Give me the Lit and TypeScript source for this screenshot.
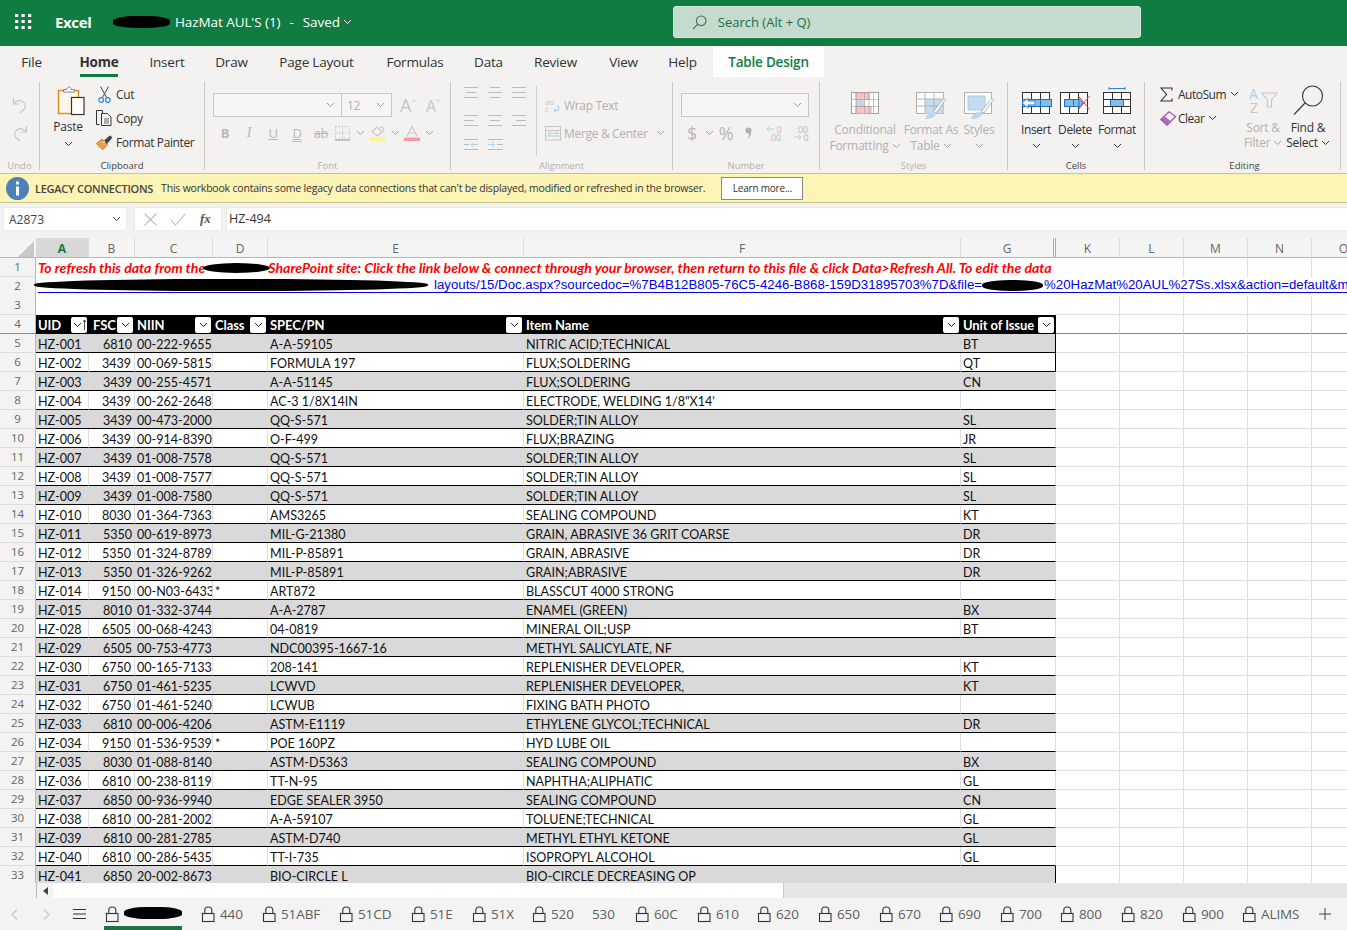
import { LitElement, html, css, svg } from "lit";
import { customElement } from "lit/decorators.js";

const chev = (c = "#605e5c") => html`<svg class="chev" width="9" height="6" viewBox="0 0 9 6"><path d="M1 1l3.5 3.5L8 1" fill="none" stroke=${c} stroke-width="1"/></svg>`;
const G = "#c8c6c4";
const BL = "#a9d3f0";

const I = {
  waffle: html`<svg width="17" height="16" viewBox="0 0 17 16" fill="#fff">${[0, 6.5, 13].map(x => [0, 6, 12].map(y => svg`<rect x=${x} y=${y} width="3.2" height="3" />`))}</svg>`,
  search: html`<svg width="15" height="15" viewBox="0 0 15 15" fill="none" stroke="#3f7259" stroke-width="1.1"><circle cx="9.2" cy="5.8" r="4.8"/><path d="M5.8 9.2L1 14"/></svg>`,
  undo: html`<svg width="16" height="17" viewBox="0 0 16 17" fill="none" stroke=${G} stroke-width="1.2"><path d="M1.5 1v6h6"/><path d="M1.5 7C4 4 7.5 3 10.5 4.5c3.500 2 3.500 6 1.500 8L8 16"/></svg>`,
  redo: html`<svg width="16" height="17" viewBox="0 0 16 17" fill="none" stroke=${G} stroke-width="1.2"><path d="M14.500 1v6h-6"/><path d="M14.500 7C12 4 8.500 3 5.500 4.500c-3.500 2-3.500 6-1.500 8L8 16"/></svg>`,
  paste: html`<svg width="28" height="31" viewBox="0 0 28 31"><rect x="1.500" y="5.500" width="20" height="23" fill="#fdf6e9" stroke="#e08a1e" stroke-width="1.400"/><path d="M6.500 7V4.500h3.500C10.500 1 13.500 1 14 4.500h3.500V7z" fill="#fff" stroke="#8a8886"/><rect x="14.500" y="12.500" width="12.500" height="17" fill="#fff" stroke="#333" stroke-width="1.200"/></svg>`,
  cut: html`<svg width="13" height="17" viewBox="0 0 13 17" fill="none"><path d="M2.500 0.500l6 11M10.500 0.500l-6 11" stroke="#444" stroke-width="1"/><circle cx="3.200" cy="14" r="2.300" stroke="#2b88d8" stroke-width="1.200"/><circle cx="9.800" cy="14" r="2.300" stroke="#2b88d8" stroke-width="1.200"/></svg>`,
  copy: html`<svg width="16" height="16" viewBox="0 0 16 16" fill="none" stroke="#333"><path d="M3.500 14.500H.5V.5h6v3"/><path d="M5.500 3.500h6l3.500 3.500v8.500H5.500z" fill="#fff"/><path d="M8 9h5M8 11h5M8 13h5" stroke-width=".8"/></svg>`,
  painter: html`<svg width="17" height="15" viewBox="0 0 17 15"><path d="M0.500 8.500L6 4l5.500 5.500L7 14.500C5 13 2 11 0.500 8.500z" fill="#f0a04b" stroke="#d67a1a"/><path d="M7 8l3-3" stroke="#fff" stroke-width="1"/><path d="M8.500 5.500L14 .8 16 2.500 11 8.500z" fill="#444" stroke="#222" stroke-width=".6"/></svg>`,
  grow: html`<svg width="17" height="15" viewBox="0 0 17 15"><text x="0" y="14" font-size="18" fill=${G} font-family="Open Sans">A</text><path d="M12 4l2.200-2.500L16.500 4" fill="none" stroke=${BL}/></svg>`,
  shrink: html`<svg width="15" height="15" viewBox="0 0 15 15"><text x="0" y="14" font-size="16" fill=${G} font-family="Open Sans">A</text><path d="M10 1l2.200 2.500L14.500 1" fill="none" stroke=${BL}/></svg>`,
  borders: html`<svg width="16" height="15" viewBox="0 0 16 15" fill="none" stroke=${G} stroke-dasharray="1.500 1.500"><rect x=".5" y=".5" width="14" height="12.500"/><path d="M7.500 1v12M1 7h14"/><path d="M0 14h15.500" stroke-dasharray="none" stroke="#b0aeac" stroke-width="1.300"/></svg>`,
  fill: html`<svg width="16" height="15" viewBox="0 0 16 15"><path d="M2 6l5-5 5 5-4.500 4z" fill="none" stroke=${G} stroke-width="1.100"/><path d="M10 2c2-2 3.500-.5 3.500 2v2" fill="none" stroke=${BL} stroke-width="1.300"/><rect y="11.500" width="16" height="3.500" fill="#fbf48c"/></svg>`,
  color: html`<svg width="16" height="15" viewBox="0 0 16 15"><path d="M3 10.500L8 .5l5 10M5 7h6" fill="none" stroke=${G} stroke-width="1.200"/><rect y="11.500" width="16" height="3.500" fill="#f29b9b"/></svg>`,
  wrap: html`<svg width="15" height="15" viewBox="0 0 15 15"><text x="0" y="6.500" font-size="8" fill=${G} font-family="Open Sans">ab</text><text x="0" y="14" font-size="8" fill=${G} font-family="Open Sans">c</text><path d="M9 12.500h3c2.500 0 2.500-4.500 0-4.500M9 12.500l2-2M9 12.500l2 2" fill="none" stroke=${BL} stroke-width="1.100"/></svg>`,
  merge: html`<svg width="16" height="15" viewBox="0 0 16 15" fill="none" stroke=${G}><rect x=".5" y=".5" width="15" height="13.500"/><path d="M.5 4.500h15M.5 10h15"/><path d="M3 7.200h10M3 7.200l2-2M3 7.200l2 2M13 7.200l-2-2M13 7.200l-2 2" stroke=${BL}/></svg>`,
  comma: html`<svg width="7" height="13" viewBox="0 0 7 13"><circle cx="3.500" cy="3.500" r="3" fill="#b3b0ad"/><path d="M6 4c.5 4-1.500 7-4 8.500C4 10 4.300 8 4 6z" fill="#b3b0ad"/></svg>`,
  dec: html`<svg width="17" height="16" viewBox="0 0 17 16" fill="none"><path d="M1 4h7M1 4l2.400-2.400M1 4l2.400 2.400" stroke=${BL}/><text x="10.500" y="7.500" font-size="9" fill="#bdbbb9" font-family="Open Sans">0</text><text x="3" y="15.500" font-size="9" fill="#bdbbb9" font-family="Open Sans">.00</text></svg>`,
  inc: html`<svg width="17" height="16" viewBox="0 0 17 16" fill="none"><text x="3" y="7.500" font-size="9" fill="#bdbbb9" font-family="Open Sans">.00</text><path d="M1 12h7M8 12l-2.400-2.400M8 12l-2.400 2.400" stroke=${BL}/><text x="10.500" y="15.500" font-size="9" fill="#bdbbb9" font-family="Open Sans">0</text></svg>`,
  cf: html`<svg width="28" height="22" viewBox="0 0 28 22"><rect x=".5" y=".5" width="27" height="21" fill="#fff" stroke="#a19f9d"/><rect x="5" y="1" width="13" height="6.500" fill="#f7c5c5" stroke="#ec9a9a"/><rect x="5" y="7.500" width="8.500" height="7" fill="#bdd7ee"/><rect x="5" y="14.500" width="15" height="7" fill="#f7c5c5" stroke="#ec9a9a"/><path d="M.5 7.500h27M.5 14.500h27M5 0v22M13.500 0v22M18 0v22M22.500 0v22" stroke="#a19f9d" stroke-width=".6" fill="none"/></svg>`,
  fat: html`<svg width="30" height="28" viewBox="0 0 30 28"><rect x=".5" y=".5" width="27" height="21" fill="#fff" stroke="#b5b3b1"/><rect x="9" y="7" width="18.500" height="14.500" fill="#c5dcf0"/><path d="M.5 7h27M.5 14h27M9 0v22M18 0v22" stroke="#b5b3b1" fill="none"/><path d="M17 20L28 6l1.500 1.500L20 21z" fill="#fff" stroke="#b5b3b1"/><path d="M9 27c1-4 5-7.500 9-7l2 1.500c0 3-4 5.500-11 5.500z" fill="#bcd7ec"/></svg>`,
  styles: html`<svg width="30" height="28" viewBox="0 0 30 28"><rect x=".5" y=".5" width="27" height="21" fill="#fff" stroke="#b5b3b1"/><rect x="4" y="4" width="17" height="14" fill="#c5dcf0" stroke="#a9cbe6"/><path d="M17 20L28 6l1.500 1.500L20 21z" fill="#fff" stroke="#b5b3b1"/><path d="M7 27c1-4 5-7.500 9-7l2 1.500c0 3-4 5.500-11 5.500z" fill="#bcd7ec"/></svg>`,
  insert: html`<svg width="31" height="22" viewBox="0 0 31 22"><rect x="1.500" y=".5" width="27" height="21" fill="#fff" stroke="#333"/><path d="M10.500 0v22M19.500 0v22" stroke="#333"/><rect x="1.500" y="7.500" width="29" height="7" fill="#85bdea" stroke="#1a73c0"/><path d="M19.500 7v8" stroke="#1a73c0"/><path d="M1 11l6-5v3h7v4H7v3z" fill="#fff" stroke="#2b88d8"/></svg>`,
  del: html`<svg width="30" height="22" viewBox="0 0 30 22"><rect x=".5" y=".5" width="27" height="21" fill="#fff" stroke="#333"/><path d="M9.500 0v22M18.500 0v22" stroke="#333"/><rect x="4.500" y="7.500" width="15" height="7" fill="#85bdea" stroke="#1a73c0"/><path d="M13.500 7v8" stroke="#1a73c0"/><path d="M19 6.500l4 4.500-4 4.500z" fill="#85bdea" stroke="#1a73c0"/><path d="M18.500 4l11 13.500M29.500 4l-11 13.500" stroke="#e8413c" stroke-width="1"/></svg>`,
  fmt: html`<svg width="28" height="27" viewBox="0 0 28 27"><path d="M6 1.500h16M6 0v3M22 0v3" stroke="#2b88d8" fill="none"/><rect x=".5" y="5.500" width="27" height="21" fill="#fff" stroke="#333"/><path d="M9.500 5v22M18.500 5v22" stroke="#333"/><rect x="7.500" y="12.500" width="13" height="7" fill="#85bdea" stroke="#1a73c0"/><path d="M0 12.500h27M0 19.500h27" stroke="#333"/><rect x="9" y="13" width="11" height="6" fill="#85bdea"/></svg>`,
  sigma: html`<svg width="13" height="15" viewBox="0 0 13 15" fill="none" stroke="#333" stroke-width="1.100"><path d="M12 3.500V1H1l5.500 6.500L1 14h11v-2.500"/></svg>`,
  eraser: html`<svg width="16" height="15" viewBox="0 0 16 15"><path d="M0.800 8.500L9 .8 15.500 5.500 7 14z" fill="#fff" stroke="#9c4fb5" stroke-width="1.300"/><path d="M0.800 8.500L4.500 5l6 5L7 14z" fill="#b065c9"/></svg>`,
  sort: html`<svg width="29" height="27" viewBox="0 0 29 27"><text x="0" y="12" font-size="14" fill=${BL} font-family="Open Sans">A</text><text x="1" y="26" font-size="14" fill=${G} font-family="Open Sans">Z</text><path d="M13 6h15l-5.500 7v7h-4v-7z" fill="none" stroke=${G} stroke-width="1.100"/></svg>`,
  find: html`<svg width="31" height="31" viewBox="0 0 31 31" fill="none" stroke="#333" stroke-width="1.100"><circle cx="19.500" cy="11" r="10"/><path d="M12 18L1 29.500"/></svg>`,
  info: html`<svg width="23" height="23" viewBox="0 0 23 23"><circle cx="11.500" cy="11.500" r="11.500" fill="#4e81b8"/><rect x="10" y="9.500" width="3" height="9" fill="#fff"/><rect x="10" y="4.500" width="3" height="3" fill="#fff"/></svg>`,
  x: html`<svg width="13" height="13" viewBox="0 0 13 13" fill="none" stroke="#bdbdbd" stroke-width="1.100"><path d="M.5.5l12 12M12.500.5l-12 12"/></svg>`,
  check: html`<svg width="16" height="13" viewBox="0 0 16 13" fill="none" stroke="#bdbdbd" stroke-width="1.100"><path d="M.5 6.500L5.500 12 15.500.5"/></svg>`,
  lock: html`<svg class="lock" width="13" height="16" viewBox="0 0 13 16" fill="none" stroke="#333" stroke-width="1.100"><rect x=".5" y="7.500" width="11.500" height="8"/><path d="M2.800 7.500V4c0-4 7-4 7 0v3.500"/></svg>`,
  burger: html`<svg width="13" height="10" viewBox="0 0 13 10" stroke="#333" stroke-width="1"><path d="M0 .5h13M0 5h13M0 9.500h13"/></svg>`,
  plus: html`<svg width="12" height="12" viewBox="0 0 12 12" stroke="#444"><path d="M0 6h12M6 0v12"/></svg>`,
  prev: html`<svg width="7" height="11" viewBox="0 0 7 11" fill="none" stroke="#c8c6c4" stroke-width="1.100"><path d="M6 .5L1 5.500l5 5"/></svg>`,
  next: html`<svg width="7" height="11" viewBox="0 0 7 11" fill="none" stroke="#c8c6c4" stroke-width="1.100"><path d="M1 .5l5 5-5 5"/></svg>`,
  left: html`<svg width="5" height="8" viewBox="0 0 5 8"><path d="M5 0L0 4l5 4z" fill="#444"/></svg>`,
};

const lines = (widths: number[], dx: number[]) => html`<svg width="15" height="13" viewBox="0 0 15 13" stroke="#bdbbb9">${widths.map((w, i) => svg`<path d="M${dx[i]} ${i * 5 + 1.5}h${w}" />`)}</svg>`;
const indentL = html`<svg width="15" height="13" viewBox="0 0 15 13" fill="none" stroke="#bdbbb9"><path d="M0 6.500h5"/><path d="M7 6.500h7M7 6.500l2.200-2.200M7 6.500l2.200 2.200" stroke=${BL}/><path d="M0 1.500h14M0 11.500h14"/></svg>`;
const indentR = html`<svg width="15" height="13" viewBox="0 0 15 13" fill="none" stroke="#bdbbb9"><path d="M9 6.500h6"/><path d="M0 6.500h6.500M6.500 6.500L4.300 4.300M6.500 6.500L4.300 8.700" stroke=${BL}/><path d="M0 1.500h15M0 11.500h15"/></svg>`;

type Row = [string, string, string, string, string, string, string];
const DATA: Row[] = [
  ["HZ-001", "6810", "00-222-9655", "", "A-A-59105", "NITRIC ACID;TECHNICAL", "BT"],
  ["HZ-002", "3439", "00-069-5815", "", "FORMULA 197", "FLUX;SOLDERING", "QT"],
  ["HZ-003", "3439", "00-255-4571", "", "A-A-51145", "FLUX;SOLDERING", "CN"],
  ["HZ-004", "3439", "00-262-2648", "", "AC-3 1/8X14IN", "ELECTRODE, WELDING 1/8\"X14'", ""],
  ["HZ-005", "3439", "00-473-2000", "", "QQ-S-571", "SOLDER;TIN ALLOY", "SL"],
  ["HZ-006", "3439", "00-914-8390", "", "O-F-499", "FLUX;BRAZING", "JR"],
  ["HZ-007", "3439", "01-008-7578", "", "QQ-S-571", "SOLDER;TIN ALLOY", "SL"],
  ["HZ-008", "3439", "01-008-7577", "", "QQ-S-571", "SOLDER;TIN ALLOY", "SL"],
  ["HZ-009", "3439", "01-008-7580", "", "QQ-S-571", "SOLDER;TIN ALLOY", "SL"],
  ["HZ-010", "8030", "01-364-7363", "", "AMS3265", "SEALING COMPOUND", "KT"],
  ["HZ-011", "5350", "00-619-8973", "", "MIL-G-21380", "GRAIN, ABRASIVE 36 GRIT COARSE", "DR"],
  ["HZ-012", "5350", "01-324-8789", "", "MIL-P-85891", "GRAIN, ABRASIVE", "DR"],
  ["HZ-013", "5350", "01-326-9262", "", "MIL-P-85891", "GRAIN;ABRASIVE", "DR"],
  ["HZ-014", "9150", "00-N03-6433", "*", "ART872", "BLASSCUT 4000 STRONG", ""],
  ["HZ-015", "8010", "01-332-3744", "", "A-A-2787", "ENAMEL (GREEN)", "BX"],
  ["HZ-028", "6505", "00-068-4243", "", "04-0819", "MINERAL OIL;USP", "BT"],
  ["HZ-029", "6505", "00-753-4773", "", "NDC00395-1667-16", "METHYL SALICYLATE, NF", ""],
  ["HZ-030", "6750", "00-165-7133", "", "208-141", "REPLENISHER DEVELOPER,", "KT"],
  ["HZ-031", "6750", "01-461-5235", "", "LCWVD", "REPLENISHER DEVELOPER,", "KT"],
  ["HZ-032", "6750", "01-461-5240", "", "LCWUB", "FIXING BATH PHOTO", ""],
  ["HZ-033", "6810", "00-006-4206", "", "ASTM-E1119", "ETHYLENE GLYCOL;TECHNICAL", "DR"],
  ["HZ-034", "9150", "01-536-9539", "*", "POE 160PZ", "HYD LUBE OIL", ""],
  ["HZ-035", "8030", "01-088-8140", "", "ASTM-D5363", "SEALING COMPOUND", "BX"],
  ["HZ-036", "6810", "00-238-8119", "", "TT-N-95", "NAPHTHA;ALIPHATIC", "GL"],
  ["HZ-037", "6850", "00-936-9940", "", "EDGE SEALER 3950", "SEALING COMPOUND", "CN"],
  ["HZ-038", "6810", "00-281-2002", "", "A-A-59107", "TOLUENE;TECHNICAL", "GL"],
  ["HZ-039", "6810", "00-281-2785", "", "ASTM-D740", "METHYL ETHYL KETONE", "GL"],
  ["HZ-040", "6810", "00-286-5435", "", "TT-I-735", "ISOPROPYL ALCOHOL", "GL"],
  ["HZ-041", "6850", "20-002-8673", "", "BIO-CIRCLE L", "BIO-CIRCLE DECREASING OP", ""],
];

const TABS: [string, number, boolean?][] = [
  ["File", 63], ["Home", 72, true], ["Insert", 64], ["Draw", 65], ["Page Layout", 105], ["Formulas", 92], ["Data", 55], ["Review", 79], ["View", 57], ["Help", 61],
];

const SHEETS: [string, number, boolean][] = [
  ["440", 41, true], ["51ABF", 57, true], ["51CD", 52, true], ["51E", 41, true], ["51X", 40, true], ["520", 39, true], ["530", 24, false], ["60C", 42, true], ["610", 40, true], ["620", 41, true], ["650", 41, true], ["670", 40, true], ["690", 41, true], ["700", 40, true], ["800", 41, true], ["820", 41, true], ["900", 40, true], ["ALIMS", 58, true],
];

const COLS = ["A", "B", "C", "D", "E", "F", "G", "K", "L", "M", "N", "O"];
const EMPTY = [0, 1, 2, 3, 4];

@customElement("app-root")
export class AppRoot extends LitElement {
  static styles = css`
    :host { display: block; width: 1347px; height: 930px; overflow: hidden; background: #f3f2f1; font-family: "Open Sans", "Noto Sans", sans-serif; color: #323130; }
    svg { display: block; flex: none; overflow: visible; }
    .top { height: 46px; background: #107c41; color: #fff; display: flex; align-items: center; padding-bottom: 2px; box-sizing: border-box; }
    .waffle { width: 55px; padding-left: 15px; box-sizing: border-box; }
    .excel { font-weight: 700; font-size: 15px; width: 58px; letter-spacing: -.35px; }
    .blob { display: inline-block; background: #000; border-radius: 50%; flex: none; }
    .b-title { width: 57px; height: 12px; margin-right: 5px; border-radius: 40%; }
    .doc { font-size: 13.5px; display: flex; align-items: center; white-space: nowrap; letter-spacing: -.08px; }
    .doc span.sep { margin: 0 9px 0 9px; }
    .doc .chev { margin-left: 3px; }
    .searchwrap { margin-left: 321px; }
    .searchbox { width: 468px; height: 32px; box-sizing: border-box; border: 1px solid #d8e7dd; border-radius: 3px; background: #c5dbcd; display: flex; align-items: center; padding-left: 18px; gap: 11px; color: #1d6e47; font-size: 13px; }

    .tabs { height: 31px; display: flex; font-size: 13.5px; box-sizing: border-box; letter-spacing: -.2px; }
    .tab { display: flex; justify-content: center; align-items: center; height: 31px; box-sizing: border-box; position: relative; white-space: nowrap; color: #323130; }
    .tab.on { font-weight: 700; color: #323130; }
    .tab .ul { position: absolute; left: 50%; bottom: 0; transform: translateX(-50%); height: 3px; width: 38px; background: #107c41; }
    .tab.td { width: 111px; background: #fff; color: #107c41; font-weight: 600; }

    .ribbon { height: 96px; display: flex; padding-top: 5px; box-sizing: border-box; font-size: 12px; letter-spacing: -.24px; }
    .group { height: 88px; display: flex; flex-direction: column; border-right: 1px solid #c8c6c4; box-sizing: border-box; flex: none; }
    .gbody { flex: 1; display: flex; min-height: 0; }
    .glabel { height: 10px; line-height: 10px; font-size: 9.500px; text-align: center; color: #b3b0ad; margin-bottom: -1px; white-space: nowrap; letter-spacing: 0; }
    .glabel.en { color: #444; }
    .col { display: flex; flex-direction: column; }
    .dis { color: #b3b0ad; }
    .undo { width: 40px; }
    .undo .gbody { flex-direction: column; align-items: center; padding: 15px 0 0 0; gap: 11px; box-sizing: border-box; }
    .clip { width: 165px; }
    .pastec { width: 36px; margin-left: 10px; display: flex; flex-direction: column; align-items: center; padding-top: 3px; box-sizing: border-box; }
    .pastec svg:first-child { margin-left: 5px; }
    .pastec .t { margin-top: 3px; line-height: 16px; }
    .pastec .chev { margin-top: 6px; }
    .small { margin-left: 10px; letter-spacing: -.38px; }
    .srow { height: 24px; display: flex; align-items: center; white-space: nowrap; }
    .sicon { width: 16px; margin-right: 4px; flex: none; display: flex; justify-content: center; }
    .font { width: 246px; }
    .pad8 { padding-left: 8px; flex-direction: column; box-sizing: border-box; }
    .selrow { display: flex; margin-top: 11px; height: 24px; align-items: center; flex: none; }
    .sel { height: 24px; box-sizing: border-box; border: 1px solid #c8c6c4; background: #f5f5f5; display: flex; justify-content: flex-end; align-items: center; padding-right: 6px; color: #b3b0ad; font-size: 12px; }
    .sel.s1 { width: 128px; border-right: none; }
    .sel.s2 { width: 51px; justify-content: space-between; padding-left: 5px; }
    .sel.s3 { width: 128px; }
    .btnrow { display: flex; margin-top: 4px; height: 24px; align-items: center; flex: none; }
    .b { display: flex; justify-content: center; align-items: center; color: #b9b7b5; flex: none; font-size: 13px; }
    .w12 { width: 12px; } .w14 { width: 14px; } .w20 { width: 20px; } .w22 { width: 22px; } .w24 { width: 24px; } .w30 { width: 30px; }
    .serifB { font-weight: 700; }
    .i { font-style: italic; font-family: "Liberation Serif", serif; font-size: 14px; }
    .u { text-decoration: underline; }
    .dbl { text-decoration: underline double; }
    .st { text-decoration: line-through; }
    .big { font-size: 18px; }
    .gA { margin-left: 8px; width: 17px; justify-content: center; display: flex; }
    .align { width: 222px; }
    .agrid { margin-left: 13px; display: grid; grid-template-columns: repeat(3, 24px); grid-template-rows: 21px 34px 15px; align-items: center; width: 72px; flex: none; align-content: start; }
    .isep { width: 1px; height: 70px; margin-top: 4px; background: #d2d0ce; }
    .wm { margin-left: 8px; padding-top: 9px; box-sizing: border-box; letter-spacing: -.32px; }
    .wm .srow { height: 28px; color: #b3b0ad; }
    .wm .sicon { width: 16px; justify-content: flex-start; margin-right: 3px; }
    .wm .chev { margin-left: 8px; }
    .number { width: 147px; }
    .styles { width: 188px; }
    .bigc { display: flex; flex-direction: column; align-items: center; white-space: nowrap; flex: none; }
    .bigc .ic { height: 40px; padding-top: 10px; box-sizing: border-box; flex: none; }
    .bigc .ic.f { padding-top: 5px; }
    .bigc .l { line-height: 16px; height: 16px; display: flex; align-items: center; gap: 3px; }
    .wA { width: 90px; } .wB { width: 42px; } .wC { width: 54px; }
    .cells { width: 137px; letter-spacing: -.4px; }
    .cells .gbody { padding-left: 8px; }
    .w40 { width: 40px; } .w38 { width: 38px; } .w46 { width: 46px; }
    .editing { width: 196px; }
    .editing .glabel { padding-left: 4px; }
    .edA { width: 86px; margin-left: 15px; flex: none; letter-spacing: -.5px; }
    .edA .chev { margin-left: 4px; }
    .edA .sicon { justify-content: flex-start; margin-right: 2px; }
    .edB { width: 34px; }
    .edC { width: 34px; margin-left: 11px; }
    .edB .ic, .edC .ic { height: 38px; padding-top: 5px; }
    .edC .ic { padding-top: 3px; }
    .edB .l, .edC .l { line-height: 15px; height: 15px; }

    .msg { height: 30px; box-sizing: border-box; background: #fbf4b5; border-top: 1px solid #c9c48c; border-bottom: 1px solid #c9c48c; display: flex; align-items: center; font-size: 10.500px; white-space: nowrap; padding-left: 6px; color: #333; letter-spacing: -.2px; }
    .msg b { margin-left: 6px; font-weight: 600; color: #444; letter-spacing: -.25px; font-size: 11px; }
    .msg .d { margin-left: 8px; }
    .learn { margin-left: 16px; width: 82px; height: 23px; border: 1px solid #8a8886; background: #fff; box-sizing: border-box; display: flex; align-items: center; justify-content: center; font-size: 10px; }

    .fbar { height: 35px; box-sizing: border-box; display: flex; padding-top: 4px; background: #f3f2f1; }
    .fbar > div { height: 24px; box-sizing: border-box; background: #fff; border: 1px solid #edebe9; display: flex; align-items: center; }
    .name { width: 124px; margin-left: 3px; justify-content: space-between; padding: 0 5px 0 5px; font-size: 12px; color: #444; }
    .fxs { width: 88px; margin-left: 7px; padding-left: 9px; }
    .fxs svg:nth-child(2) { margin-left: 13px; }
    .fx { margin-left: 14px; font-family: "Liberation Serif", serif; font-style: italic; font-weight: 700; font-size: 13px; color: #555; }
    .input { flex: 1; margin-left: 4px; padding: 0 0 2px 2px; font-size: 12.500px; color: #333; border-right: none !important; }

    .colhead, .row { display: grid; grid-template-columns: 36px 53px 46px 78px 55px 256px 437px 95px 64px 64px 64px 64px 64px; }
    .colhead { height: 20px; background: #f4f4f4; }
    .colhead > div { box-sizing: border-box; border-bottom: 1px solid #b7b7b7; border-right: 1px solid #dcdcdc; display: flex; justify-content: center; align-items: center; font-size: 12px; color: #666; padding-top: 1px; }
    .colhead .corner { border-right: none; justify-content: flex-end; padding: 2px 2px 0 0; }
    .colhead .sel-a { background: #d8d8d8; color: #107c41; font-weight: 700; }
    .colhead .g-end { border-right: 3px double #aaa; }
    .body { height: 625px; overflow: hidden; background: #fff; }
    .row { height: 19px; font-family: Lato, "Carlito", sans-serif; font-size: 12.560px; color: #111; }
    .row > div { box-sizing: border-box; white-space: nowrap; line-height: 18px; min-width: 0; }
    .row > .rn { background: #f3f3f3; border-right: 1px solid #b7b7b7; border-bottom: 1px solid #dcdcdc; text-align: center; font-family: "Open Sans", sans-serif; font-size: 11.500px; color: #666; line-height: 18px; }
    .e { border-right: 1px solid #dedede; border-bottom: 1px solid #dedede; }
    .e.nb { border-bottom: none; }
    .span { grid-column: 2 / span 8; padding-left: 2px; }
    .red { color: #f00; font-style: italic; font-weight: 700; font-size: 14.100px; display: flex; align-items: center; }
    .b-r1 { width: 67px; height: 10px; margin: 0 -2px 0 -2px; }
    .row > .link { grid-column: 2 / span 12; line-height: 20px; }
    .linkin { display: inline-flex; align-items: center; font-family: "Liberation Sans", sans-serif; font-size: 13.260px; color: #0000ee; border-bottom: 1px solid #0000ee; height: 14px; margin-left: 2px; line-height: 14px; }
    .b-r2 { width: 394px; height: 12px; margin: 0 6px 0 -4px; border-radius: 45%; }
    .b-r3 { width: 61px; height: 11px; margin: 0 1px 0 0; border-radius: 45%; }
    .blank7 { grid-column: 2 / span 7; }
    .row > .hd { background: #000; color: #fff; font-weight: 700; display: flex; justify-content: space-between; align-items: center; padding: 0 2px 0 2px; overflow: hidden; font-size: 13px; letter-spacing: -.1px; line-height: 19px; }
    .hd > span:first-child { padding-top: 2px; }
    .row > .hd.p4 { padding-left: 4px; }
    .fb { width: 16px; height: 16px; border-radius: 2px; background: #fff; display: flex; justify-content: center; align-items: center; flex: none; gap: 1px; }
    .frz { border-bottom: 1px solid #8a8a8a !important; }
    .c { border-bottom: 1px solid #000; padding: 2px 2px 0 2px; overflow: hidden; }
    .gr .c { background: #d9d9d9; }
    .wh .c { background: #fff; border-right: 1px solid #dedede; }
    .row > .num { text-align: right; padding-right: 3px; }
    .endb { border-right: 1px solid #000 !important; }

    .scroll { height: 15px; display: flex; background: #e6e6e6; }
    .scroll .sp { width: 36px; background: #f3f3f3; }
    .scroll .arrow { width: 17px; background: #f3f3f3; display: flex; justify-content: center; align-items: center; border-left: 1px solid #b7b7b7; box-sizing: border-box; }
    .scroll .thumb { width: 731px; background: #fff; border-right: 1px solid #c8c8c8; box-sizing: border-box; }

    .sheets { height: 32px; background: #f3f3f3; display: flex; font-size: 13.500px; color: #605e5c; box-sizing: border-box; align-items: stretch; }
    .nav { display: flex; align-items: center; flex: none; }
    .nav .p { width: 32px; padding-left: 11px; box-sizing: border-box; }
    .nav .q { width: 41px; padding-left: 11px; box-sizing: border-box; }
    .nav .r { width: 31px; }
    .sh { display: flex; align-items: center; gap: 5px; flex: none; margin-right: 20px; white-space: nowrap; letter-spacing: -.1px; height: 32px; box-sizing: border-box; }
    .sh.active { width: 78px; border-bottom: 4px solid #217346; padding: 4px 0 0 2px; margin-right: 20px; gap: 5px; }
    .b-tab { width: 58px; height: 12px; border-radius: 40%; margin-top: -2px; }
    .plus { display: flex; align-items: center; margin-left: -2px; }
  `;

  private big(icon: unknown, label: unknown, cls: string, dis: boolean, second: unknown, f = false) {
    return html`<div class="bigc ${cls} ${dis ? "dis" : ""}"><div class="ic ${f ? "f" : ""}">${icon}</div><div class="l">${label}</div><div class="l">${second}</div></div>`;
  }

  private dataRow(r: Row, i: number) {
    const n = i + 5;
    const grey = i % 2 === 0;
    const endb = n <= 6 || n === 33;
    return html`<div class="row ${grey ? "gr" : "wh"}">
      <div class="rn">${n}</div>
      <div class="c">${r[0]}</div>
      <div class="c num">${r[1]}</div>
      <div class="c">${r[2]}</div>
      <div class="c">${r[3]}</div>
      <div class="c">${r[4]}</div>
      <div class="c">${r[5]}</div>
      <div class="c ${endb ? "endb" : ""}">${r[6]}</div>
      ${EMPTY.map(() => html`<div class="e"></div>`)}
    </div>`;
  }

  private hdCell(label: string, sort = false, p4 = false) {
    return html`<div class="hd ${p4 ? "p4" : ""}"><span>${label}</span><span class="fb">${chev("#222")}${sort ? html`<svg width="3" height="11" viewBox="0 0 3 11"><path d="M1.500 11V1M0 3l1.500-2L3 3" fill="none" stroke="#222" stroke-width=".8"/></svg>` : ""}</span></div>`;
  }

  render() {
    const a = (w: number[], d: number[]) => html`<div>${lines(w, d)}</div>`;
    return html`
      <div class="top">
        <div class="waffle">${I.waffle}</div>
        <div class="excel">Excel</div>
        <div class="doc"><span class="blob b-title"></span><span>HazMat AUL'S (1)</span><span class="sep">-</span><span>Saved</span>${chev("#fff")}</div>
        <div class="searchwrap"><div class="searchbox">${I.search}<span>Search (Alt + Q)</span></div></div>
      </div>

      <div class="tabs">
        ${TABS.map(([t, w, on]) => html`<div class="tab ${on ? "on" : ""}" style="width:${w}px">${t}${on ? html`<span class="ul"></span>` : ""}</div>`)}
        <div class="tab td">Table Design</div>
      </div>

      <div class="ribbon">
        <div class="group undo"><div class="gbody">${I.undo}${I.redo}</div><div class="glabel">Undo</div></div>

        <div class="group clip"><div class="gbody">
          <div class="pastec">${I.paste}<span class="t">Paste</span>${chev("#333")}</div>
          <div class="col small">
            <div class="srow"><span class="sicon">${I.cut}</span>Cut</div>
            <div class="srow"><span class="sicon">${I.copy}</span>Copy</div>
            <div class="srow"><span class="sicon">${I.painter}</span>Format Painter</div>
          </div>
        </div><div class="glabel en">Clipboard</div></div>

        <div class="group font"><div class="gbody pad8">
          <div class="selrow">
            <div class="sel s1">${chev("#a19f9d")}</div><div class="sel s2"><span>12</span>${chev("#a19f9d")}</div>
            <div class="gA">${I.grow}</div><div class="gA">${I.shrink}</div>
          </div>
          <div class="btnrow">
            <div class="b w24 serifB">B</div><div class="b w24 i">I</div><div class="b w24 u">U</div><div class="b w24 dbl">D</div><div class="b w24 st">ab</div>
            <div class="b w20">${I.borders}</div><div class="b w14">${chev("#a19f9d")}</div>
            <div class="b w22">${I.fill}</div><div class="b w12">${chev("#a19f9d")}</div>
            <div class="b w22">${I.color}</div><div class="b w12">${chev("#a19f9d")}</div>
          </div>
        </div><div class="glabel">Font</div></div>

        <div class="group align"><div class="gbody">
          <div class="agrid">
            ${a([14, 10, 14], [0, 2, 0])}${a([10, 14, 10], [2, 0, 2])}${a([14, 14, 14], [0, 0, 0])}
            ${a([14, 10, 14], [0, 0, 0])}${a([14, 10, 14], [0, 2, 0])}${a([14, 10, 14], [0, 4, 0])}
            <div>${indentL}</div><div>${indentR}</div>
          </div>
          <div class="isep"></div>
          <div class="col wm">
            <div class="srow"><span class="sicon">${I.wrap}</span>Wrap Text</div>
            <div class="srow"><span class="sicon">${I.merge}</span>Merge &amp; Center${chev("#a19f9d")}</div>
          </div>
        </div><div class="glabel">Alignment</div></div>

        <div class="group number"><div class="gbody pad8">
          <div class="selrow"><div class="sel s3">${chev("#a19f9d")}</div></div>
          <div class="btnrow">
            <div class="b w22 big">$</div><div class="b w12">${chev("#a19f9d")}</div>
            <div class="b w22 big">%</div><div class="b w22">${I.comma}</div>
            <div class="b w30">${I.dec}</div><div class="b w24">${I.inc}</div>
          </div>
        </div><div class="glabel">Number</div></div>

        <div class="group styles"><div class="gbody">
          ${this.big(I.cf, "Conditional", "wA", true, html`Formatting${chev("#a19f9d")}`)}
          ${this.big(I.fat, "Format As", "wB", true, html`Table${chev("#a19f9d")}`)}
          ${this.big(I.styles, "Styles", "wC", true, chev("#a19f9d"))}
        </div><div class="glabel">Styles</div></div>

        <div class="group cells"><div class="gbody">
          ${this.big(I.insert, "Insert", "w40", false, chev("#333"))}
          ${this.big(I.del, "Delete", "w38", false, chev("#333"))}
          ${this.big(I.fmt, "Format", "w46", false, chev("#333"), true)}
        </div><div class="glabel en">Cells</div></div>

        <div class="group editing"><div class="gbody">
          <div class="col edA">
            <div class="srow"><span class="sicon">${I.sigma}</span>AutoSum${chev("#333")}</div>
            <div class="srow"><span class="sicon">${I.eraser}</span>Clear${chev("#333")}</div>
          </div>
          ${this.big(I.sort, "Sort &", "edB", true, html`Filter${chev("#a19f9d")}`)}
          ${this.big(I.find, "Find &", "edC", false, html`Select${chev("#333")}`)}
        </div><div class="glabel en">Editing</div></div>
      </div>

      <div class="msg">
        ${I.info}
        <b>LEGACY CONNECTIONS</b>
        <span class="d">This workbook contains some legacy data connections that can't be displayed, modified or refreshed in the browser.</span>
        <div class="learn">Learn more...</div>
      </div>

      <div class="fbar">
        <div class="name"><span>A2873</span>${chev("#444")}</div>
        <div class="fxs">${I.x}${I.check}<span class="fx">fx</span></div>
        <div class="input">HZ-494</div>
      </div>

      <div class="colhead">
        <div class="corner"><svg width="16" height="16" viewBox="0 0 16 16"><path d="M16 0v16H0z" fill="#c8c8c8"/></svg></div>
        ${COLS.map((c, i) => html`<div class="${i === 0 ? "sel-a" : ""} ${c === "G" ? "g-end" : ""}">${c}</div>`)}
      </div>

      <div class="body">
        <div class="row">
          <div class="rn">1</div>
          <div class="span red">To refresh this data from the<span class="blob b-r1"></span>SharePoint site: Click the link below &amp; connect through your browser, then return to this file &amp; click Data&gt;Refresh All. To edit the data</div>
          ${EMPTY.slice(1).map(() => html`<div class="e nb"></div>`)}
        </div>
        <div class="row">
          <div class="rn">2</div>
          <div class="link"><span class="linkin"><span class="blob b-r2"></span>layouts/15/Doc.aspx?sourcedoc=%7B4B12B805-76C5-4246-B868-159D31895703%7D&amp;file=<span class="blob b-r3"></span>%20HazMat%20AUL%27Ss.xlsx&amp;action=default&amp;mobileredirect=true</span></div>
        </div>
        <div class="row">
          <div class="rn">3</div>
          <div class="blank7"></div>
          ${EMPTY.map(() => html`<div class="e"></div>`)}
        </div>
        <div class="row">
          <div class="rn frz">4</div>
          ${this.hdCell("UID", true)}${this.hdCell("FSC", false, true)}${this.hdCell("NIIN")}${this.hdCell("Class")}${this.hdCell("SPEC/PN")}${this.hdCell("Item Name")}${this.hdCell("Unit of Issue")}
          ${EMPTY.map(() => html`<div class="e frz"></div>`)}
        </div>
        ${DATA.map((r, i) => this.dataRow(r, i))}
      </div>

      <div class="scroll"><div class="sp"></div><div class="arrow">${I.left}</div><div class="thumb"></div></div>

      <div class="sheets">
        <div class="nav"><div class="p">${I.prev}</div><div class="q">${I.next}</div><div class="r">${I.burger}</div></div>
        <div class="sh active">${I.lock}<span class="blob b-tab"></span></div>
        ${SHEETS.map(([t, w, l]) => html`<div class="sh" style="width:${w}px">${l ? I.lock : ""}<span>${t}</span></div>`)}
        <div class="plus">${I.plus}</div>
      </div>
    `;
  }
}
